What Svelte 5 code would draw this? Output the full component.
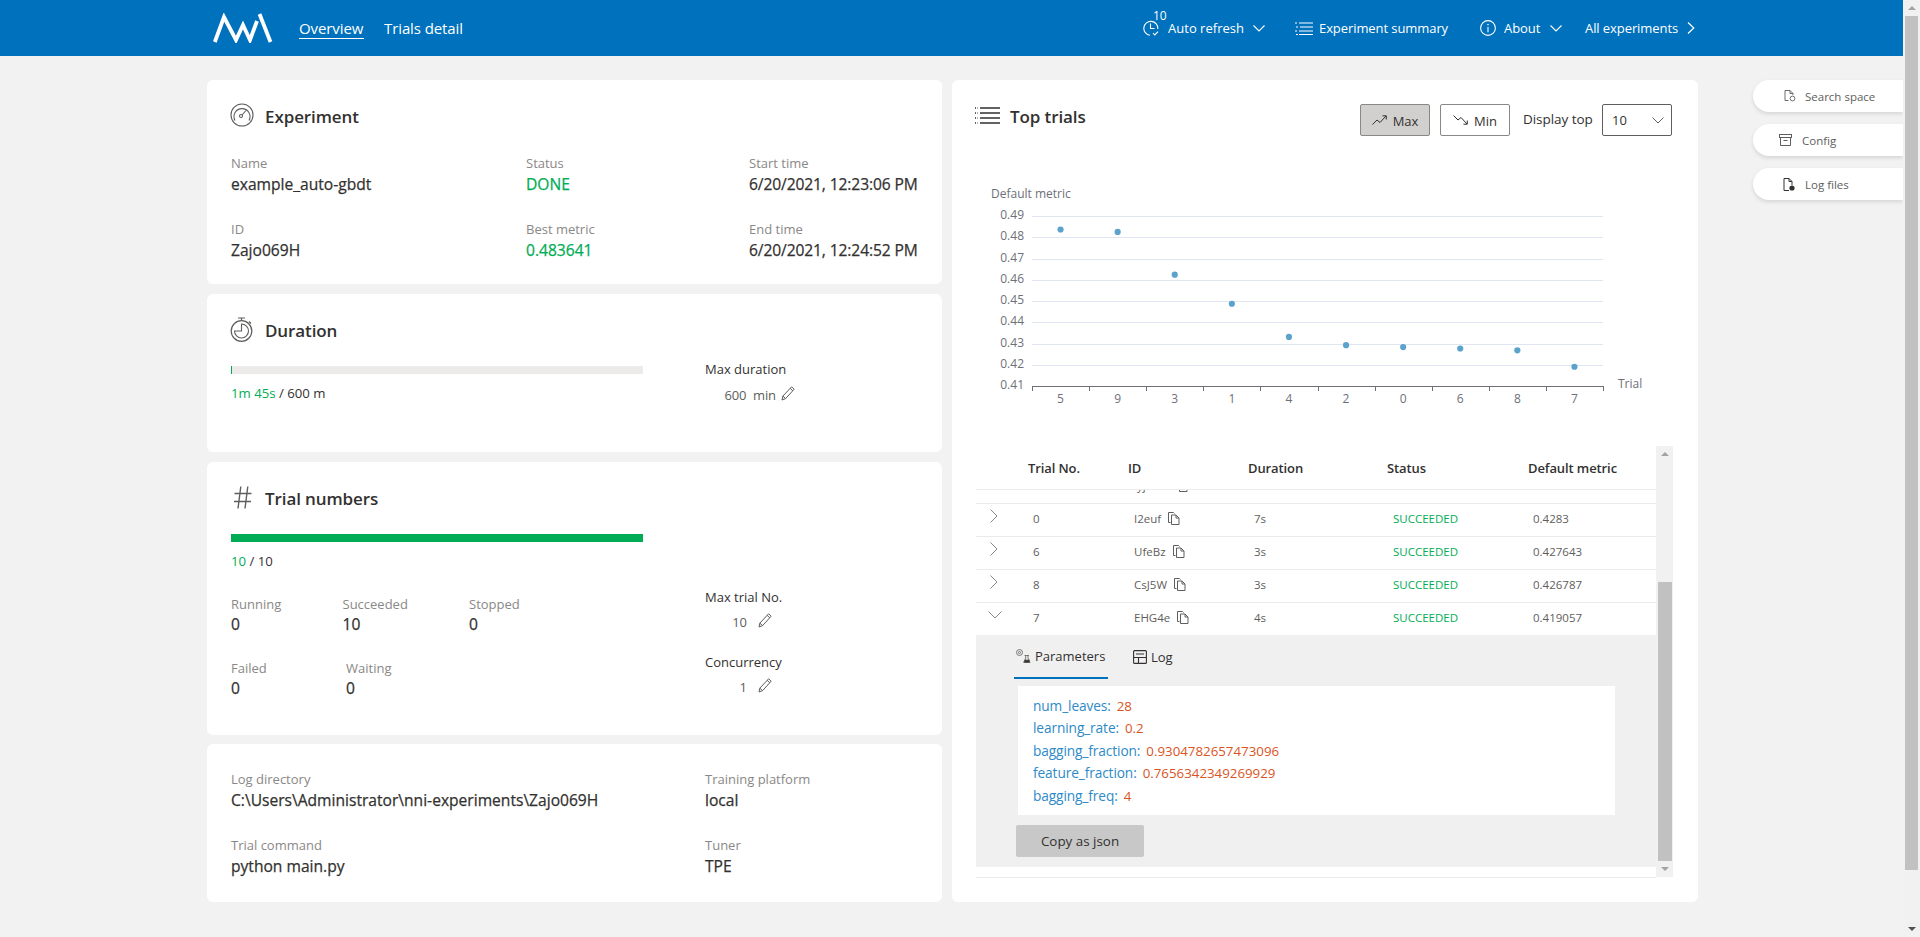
<script>
  const yTicks = [0.49, 0.48, 0.47, 0.46, 0.45, 0.44, 0.43, 0.42, 0.41];
  const points = [
    ['5', 0.483641], ['9', 0.4825], ['3', 0.4624], ['1', 0.4487], ['4', 0.4331],
    ['2', 0.4292], ['0', 0.4283], ['6', 0.427643], ['8', 0.426787], ['7', 0.419057]
  ];
  const yOf = (v) => 386 - (v - 0.41) * 2125;
  const band = 57.1;
  const rows = [
    ['0', 'I2euf', '7s', '0.4283'],
    ['6', 'UfeBz', '3s', '0.427643'],
    ['8', 'CsJ5W', '3s', '0.426787']
  ];
  const params = [
    ['num_leaves', '28'],
    ['learning_rate', '0.2'],
    ['bagging_fraction', '0.9304782657473096'],
    ['feature_fraction', '0.7656342349269929'],
    ['bagging_freq', '4']
  ];
</script>

{#snippet pencil()}
  <svg class="pencil" width="14" height="15" viewBox="0 0 14 15" fill="none" stroke="#605e5c" stroke-width="1">
    <path d="M10.6 0.8 13.2 3.2 4.6 12.6 1 14 1.8 10.2Z" />
    <path d="M9.2 2.4 11.8 4.8M1.8 10.2 4.6 12.6" />
  </svg>
{/snippet}

{#snippet copy()}
  <svg class="copy" width="12" height="13" viewBox="0 0 12 13" fill="none" stroke="#605e5c" stroke-width="1">
    <path d="M2.5 10.5H0.5V0.5H5.5L6.5 1.5" />
    <path d="M3.5 3 H8 L11 6 V12.5 H3.5Z" />
    <path d="M8 3V6H11" />
  </svg>
{/snippet}

<div class="page">
  <div class="main">
    <nav class="nav">
      <svg class="logo" width="60" height="30" viewBox="0 0 60 30" fill="none" stroke="#fff" stroke-width="3.8" stroke-linejoin="miter">
        <path d="M1.8 29 11 4 23 27 30 12 37 27 44 8" />
        <path d="M46.5 1 57.5 29" />
      </svg>
      <a class="tab active">Overview</a>
      <a class="tab second">Trials detail</a>
      <div class="nav-right">
        <div class="nav-item refresh">
          <span class="refresh-count">10</span>
          <svg width="17" height="16" viewBox="0 0 17 16" fill="none" stroke="#fff" stroke-width="1.1">
            <path d="M7 15.3A7 7 0 1 1 14.8 9" />
            <path d="M7.5 3.5V8.5H11.5" />
            <path d="M10 13.2 11.8 15 15 11.6" />
          </svg>
          <span class="nav-label auto">Auto refresh</span>
          <svg width="12" height="7" viewBox="0 0 12 7" fill="none" stroke="#fff" stroke-width="1.1"><path d="M0.5 0.5 6 6 11.5 0.5" /></svg>
        </div>
        <div class="nav-item summary">
          <svg width="18" height="13" viewBox="0 0 18 13" fill="none" stroke="#fff" stroke-width="1.1">
            <path d="M4 1H18M5 5H18M4 9H18M4 12.5H18" />
            <path d="M0 1H2M1 5H3M0 9H2M1 12.5H3" />
          </svg>
          <span class="nav-label">Experiment summary</span>
        </div>
        <div class="nav-item about">
          <svg width="16" height="16" viewBox="0 0 16 16" fill="none" stroke="#fff" stroke-width="1.1">
            <circle cx="8" cy="8" r="7.4" />
            <path d="M8 7V12.2" />
            <path d="M8 4V5.2" stroke-width="1.4" />
          </svg>
          <span class="nav-label">About</span>
          <svg width="12" height="7" viewBox="0 0 12 7" fill="none" stroke="#fff" stroke-width="1.1"><path d="M0.5 0.5 6 6 11.5 0.5" /></svg>
        </div>
        <div class="nav-item all">
          <span class="nav-label">All experiments</span>
          <svg width="8" height="12" viewBox="0 0 8 12" fill="none" stroke="#fff" stroke-width="1.2"><path d="M1 0.5 6.8 6 1 11.5" /></svg>
        </div>
      </div>
    </nav>

    <div class="content">
      <div class="left">
        <section class="card exp">
          <h2 class="head">
            <svg class="head-icon" width="24" height="24" viewBox="0 0 24 24" fill="none" stroke="#605e5c" stroke-width="1.1">
              <circle cx="12" cy="12" r="11" />
              <path d="M5 17.5A8 8 0 1 1 19 17.5" />
              <circle cx="11" cy="13" r="1.5" />
              <path d="M12 12 16 7.5" />
            </svg>
            Experiment
          </h2>
          <div class="exp-grid">
            <div><div class="label">Name</div><div class="value">example_auto-gbdt</div></div>
            <div><div class="label">Status</div><div class="value green">DONE</div></div>
            <div><div class="label">Start time</div><div class="value date">6/20/2021, 12:23:06 PM</div></div>
            <div><div class="label">ID</div><div class="value">Zajo069H</div></div>
            <div><div class="label">Best metric</div><div class="value green">0.483641</div></div>
            <div><div class="label">End time</div><div class="value date">6/20/2021, 12:24:52 PM</div></div>
          </div>
        </section>

        <section class="card dur">
          <h2 class="head">
            <svg class="head-icon" width="24" height="25" viewBox="0 0 24 25" fill="none" stroke="#605e5c" stroke-width="1.2">
              <circle cx="11.5" cy="14" r="10.3" />
              <path d="M11.5 7A7 7 0 1 1 4.5 14H11.5Z" stroke-width="1.1" />
              <path d="M8 1H15M11.5 1V4M19 4.5 21 6.5" />
            </svg>
            Duration
          </h2>
          <div class="split">
            <div class="bar-col">
              <div class="bar"><div class="bar-fill dur-fill"></div></div>
              <div class="progress"><span class="green">1m 45s</span> / 600 m</div>
            </div>
            <div class="edit-col dur-edit">
              <div class="edit-title">Max duration</div>
              <div class="edit-val"><span class="edit-num min">600&nbsp; min</span>{@render pencil()}</div>
            </div>
          </div>
        </section>

        <section class="card trials">
          <h2 class="head">
            <svg class="head-icon hash" width="18" height="23" viewBox="0 0 18 23" fill="none" stroke="#605e5c" stroke-width="1.4">
              <path d="M6.8 0.5 4 22.5M13.8 0.5 11 22.5M0.5 7.5H17.5M0 15.5H17" />
            </svg>
            Trial numbers
          </h2>
          <div class="split">
            <div class="bar-col">
              <div class="bar"><div class="bar-fill full"></div></div>
              <div class="progress"><span class="green">10</span> / 10</div>
              <div class="stats first">
                <div class="st w1"><div class="label">Running</div><div class="value">0</div></div>
                <div class="st w2"><div class="label">Succeeded</div><div class="value">10</div></div>
                <div class="st"><div class="label">Stopped</div><div class="value">0</div></div>
              </div>
              <div class="stats">
                <div class="st w3"><div class="label">Failed</div><div class="value">0</div></div>
                <div class="st"><div class="label">Waiting</div><div class="value">0</div></div>
              </div>
            </div>
            <div class="edit-col trial-edit">
              <div class="edit-title">Max trial No.</div>
              <div class="edit-val"><span class="edit-num n">10</span>{@render pencil()}</div>
              <div class="edit-title conc">Concurrency</div>
              <div class="edit-val"><span class="edit-num n">1</span>{@render pencil()}</div>
            </div>
          </div>
        </section>

        <section class="card log">
          <div class="log-grid">
            <div><div class="label">Log directory</div><div class="value">C:\Users\Administrator\nni-experiments\Zajo069H</div></div>
            <div><div class="label">Training platform</div><div class="value">local</div></div>
            <div><div class="label">Trial command</div><div class="value">python main.py</div></div>
            <div><div class="label">Tuner</div><div class="value">TPE</div></div>
          </div>
        </section>
      </div>

      <section class="card right">
        <div class="top-row">
          <h2 class="head">
            <svg class="head-icon" width="25" height="17" viewBox="0 0 25 17" fill="none" stroke="#323130" stroke-width="1.3">
              <path d="M5 1H25M5 6H25M5 11H25M5 16H25" />
              <path d="M0 1H2.5M0 6H2.5M0 11H2.5M0 16H2.5" stroke-dasharray="1 1" />
            </svg>
            Top trials
          </h2>
          <div class="controls">
            <button class="btn on">
              <svg width="15" height="10" viewBox="0 0 15 10" fill="none" stroke="#323130" stroke-width="1"><path d="M0.5 9.5 5 5 8 7.5 14 1M10.5 0.8H14.3V4.5" /></svg>
              <span class="btn-t">Max</span>
            </button>
            <button class="btn">
              <svg width="15" height="10" viewBox="0 0 15 10" fill="none" stroke="#323130" stroke-width="1"><path d="M0.5 0.5 5 5 8 2.5 14 9M10.5 9.2H14.3V5.5" /></svg>
              <span class="btn-t">Min</span>
            </button>
            <span class="disp">Display top</span>
            <div class="select">
              <span>10</span>
              <svg width="12" height="7" viewBox="0 0 12 7" fill="none" stroke="#605e5c" stroke-width="1"><path d="M0.5 0.5 6 6 11.5 0.5" /></svg>
            </div>
          </div>
        </div>

        <svg class="chart" width="697" height="240" viewBox="975 180 697 240">
          <text x="991" y="198" class="ct">Default metric</text>
          {#each yTicks as t, i}
            <text x="1024" y={216 + i * 21.25 + 3} class="ct" text-anchor="end">{t.toFixed(2)}</text>
            {#if i < 8}
              <line x1="1032" x2="1603" y1={Math.round(216 + i * 21.25) + 0.5} y2={Math.round(216 + i * 21.25) + 0.5} stroke="#e0e6f1" />
            {/if}
          {/each}
          <line x1="1032" x2="1603" y1="386.5" y2="386.5" stroke="#6e7079" />
          {#each points as p, i}
            <line x1={Math.round(1032 + i * band) + 0.5} x2={Math.round(1032 + i * band) + 0.5} y1="386" y2="391" stroke="#6e7079" />
            <text x={1032 + band / 2 + i * band} y="403" class="ct" text-anchor="middle">{p[0]}</text>
            <circle cx={1032 + band / 2 + i * band} cy={yOf(p[1])} r="3.1" fill="#5ba3cb" />
          {/each}
          <line x1="1603.5" x2="1603.5" y1="386" y2="391" stroke="#6e7079" />
          <text x="1618" y="388" class="ct">Trial</text>
        </svg>

        <div class="table">
          <div class="tbody">
            <div class="thead">
              <span>Trial No.</span><span>ID</span><span>Duration</span><span>Status</span><span>Default metric</span>
            </div>
            <div class="clip"><div class="clip-inner"><span class="clip-id">yj</span>{@render copy()}</div></div>
            {#each rows as r}
              <div class="row">
                <svg class="chev" width="8" height="14" viewBox="0 0 8 14" fill="none" stroke="#8a8886" stroke-width="1"><path d="M0.5 0.5 7 7 0.5 13.5" /></svg>
                <span>{r[0]}</span>
                <span class="id">{r[1]}{@render copy()}</span>
                <span>{r[2]}</span>
                <span class="ok">SUCCEEDED</span>
                <span>{r[3]}</span>
              </div>
            {/each}
            <div class="row last">
              <svg class="chev" width="14" height="8" viewBox="0 0 14 8" fill="none" stroke="#8a8886" stroke-width="1"><path d="M0.5 0.5 7 7 13.5 0.5" /></svg>
              <span>7</span>
              <span class="id">EHG4e{@render copy()}</span>
              <span>4s</span>
              <span class="ok">SUCCEEDED</span>
              <span>0.419057</span>
            </div>
            <div class="detail">
              <div class="dtabs">
                <div class="dtab sel">
                  <svg width="15" height="14" viewBox="0 0 15 14" fill="none" stroke="#605e5c" stroke-width="0.8">
                    <circle cx="3.5" cy="3.5" r="3" />
                    <circle cx="3.5" cy="3.5" r="1.1" />
                    <path d="M8.5 6.5H13M9.7 6.5V9L7.8 13.5H14L12 9V6.5" />
                    <path d="M8.6 11H13.4V13.5H8Z" fill="#323130" />
                  </svg>
                  Parameters
                </div>
                <div class="dtab">
                  <svg width="14" height="14" viewBox="0 0 14 14" fill="none" stroke="#323130" stroke-width="1.1">
                    <rect x="0.6" y="0.6" width="12.8" height="12.8" rx="1" />
                    <path d="M3 4H11M0.6 7.5H13.4M5.5 7.5V13.4" />
                  </svg>
                  Log
                </div>
              </div>
              <div class="params">
                {#each params as p}
                  <div class="param"><span class="key">{p[0]}:</span><span class="val">{p[1]}</span></div>
                {/each}
              </div>
              <button class="copy-btn">Copy as json</button>
            </div>
            <div class="tail"></div>
          </div>
          <div class="tscroll">
            <span class="arr up"></span>
            <div class="tspace"></div>
            <div class="tthumb"></div>
            <span class="arr down"></span>
          </div>
        </div>
      </section>

      <aside class="side">
        <div class="pill">
          <svg class="s1" width="12" height="12" viewBox="0 0 12 12" fill="none" stroke="#605e5c" stroke-width="0.9"><path d="M4.5 10.5H1V0.5H6L9 3.5V5" /><path d="M6 0.5V3.5H9" /><circle cx="8.5" cy="8.5" r="2.4" /></svg>
          <span>Search space</span>
        </div>
        <div class="pill">
          <svg class="s2" width="13" height="12" viewBox="0 0 13 12" fill="none" stroke="#605e5c" stroke-width="1"><rect x="0.5" y="0.5" width="12" height="3" /><path d="M1.5 3.5V11.5H11.5V3.5M4.5 6.5H8.5" /></svg>
          <span>Config</span>
        </div>
        <div class="pill">
          <svg class="s3" width="12" height="13" viewBox="0 0 12 13" fill="none" stroke="#323130" stroke-width="1"><path d="M6 12.5H1V0.5H6L9 3.5V7" /><path d="M6 0.5V3.5H9" /><circle cx="9" cy="10" r="2.6" fill="#323130" stroke="none" /></svg>
          <span>Log files</span>
        </div>
      </aside>
    </div>
  </div>

  <div class="vscroll">
    <span class="arr up"></span>
    <div class="vthumb"></div>
    <div class="tspace"></div>
    <span class="arr down dark"></span>
  </div>
</div>

<style>
  :global(body) {
    margin: 0;
    background: #f2f2f2;
    font-family: "Open Sans", "Noto Sans", sans-serif;
    color: #323130;
  }
  .page { display: flex; height: 937px; overflow: hidden; }
  .main { width: 1903px; flex: none; }
  .nav {
    height: 56px;
    background: #0071bc;
    display: flex;
    align-items: center;
    color: #fff;
    padding-left: 213px;
    box-sizing: border-box;
  }
  .logo { display: block; }
  .tab { font-size: 15px; line-height: 20px; color: #fff; margin-top: -1px; letter-spacing: -0.1px; white-space: nowrap; }
  .tab.active { margin-left: 26px; width: 65px; box-shadow: 0 1px 0 0 #fff; }
  .tab.second { margin-left: 20px; }
  .nav-right { margin-left: auto; padding-right: 208px; display: flex; align-items: center; }
  .nav-item { display: flex; align-items: center; font-size: 13px; position: relative; white-space: nowrap; flex: none; }
  .nav-label { letter-spacing: -0.08px; }
  .refresh { width: 152px; }
  .refresh-count { position: absolute; left: 10px; top: -10px; font-size: 12px; line-height: 14px; }
  .nav-label.auto { margin-left: 8px; width: 85px; letter-spacing: 0.02px; }
  .summary { width: 185px; }
  .summary .nav-label { margin-left: 6px; }
  .about { width: 105px; }
  .about .nav-label { margin-left: 8px; width: 46px; }
  .all { width: 110px; }
  .all .nav-label { width: 102px; }

  .content { display: flex; padding: 24px 0 0 207px; align-items: flex-start; }
  .left { width: 735px; display: flex; flex-direction: column; flex: none; }
  .card { background: #fff; border-radius: 6px; box-sizing: border-box; }
  .left .card { padding: 24px 0 0 24px; margin-bottom: 10px; }
  .exp { height: 204px; }
  .dur { height: 158px; }
  .left .trials { height: 273px; margin-bottom: 9px; }
  .log { height: 158px; }
  .head {
    margin: -1px 0 1px;
    height: 26px;
    display: flex;
    align-items: center;
    font-size: 17px;
    font-weight: 600;
    letter-spacing: -0.1px;
    color: #323130;
    white-space: nowrap;
  }
  .head-icon { flex: none; margin-left: -1px; margin-right: 11px; margin-top: -2px; }
  .hash { margin-left: 3px; margin-right: 13px; margin-top: -2px; }
  .label { font-size: 13px; line-height: 22px; color: #8a8886; white-space: nowrap; }
  .value {
    font-size: 15.6px;
    line-height: 22px;
    font-weight: 400;
    -webkit-text-stroke: 0.25px currentColor;
    color: #323130;
    white-space: nowrap;
  }
  .value.date { letter-spacing: -0.11px; }
  .exp-grid .value, .log-grid .value { margin: -1px 0 1px; }
  .value.green, .green { color: #00ad56; }
  .exp-grid {
    margin-top: 23px;
    display: grid;
    grid-template-columns: 295px 223px 1fr;
    row-gap: 22px;
  }
  .split { display: flex; align-items: flex-start; }
  .bar-col { width: 412px; flex: none; margin-top: 22px; }
  .bar { height: 8px; background: #edebe9; }
  .bar-fill { height: 100%; background: #00ad56; }
  .dur-fill { width: 1px; }
  .full { width: 100%; }
  .progress { margin-top: 8px; font-size: 13.2px; line-height: 22px; color: #323130; }
  .edit-col { margin-left: 62px; font-size: 13px; line-height: 22px; }
  .dur-edit { margin-top: 14px; }
  .trial-edit { margin-top: 74px; }
  .edit-title { color: #323130; white-space: nowrap; }
  .edit-val { margin-top: 4px; display: flex; align-items: center; color: #605e5c; }
  .trial-edit .edit-val { margin-top: 3px; }
  .edit-num { display: block; text-align: right; white-space: nowrap; flex: none; }
  .edit-num.min { width: 71px; margin-right: 5px; letter-spacing: -0.1px; }
  .edit-num.n { width: 42px; margin-right: 11px; }
  .edit-title.conc { margin-top: 18px; }
  .pencil { flex: none; margin-top: -3px; }
  .stats { display: flex; margin-top: 24px; }
  .stats.first { margin-top: 22px; }
  .stats .label, .stats .value { line-height: 20px; }
  .st { flex: none; }
  .w1 { width: 111.5px; }
  .w2 { width: 126.5px; }
  .w3 { width: 115px; }
  .log-grid { display: grid; grid-template-columns: 474px 1fr; row-gap: 22px; }

  .right { width: 746px; height: 822px; flex: none; margin-left: 10px; padding: 24px 26px 0 23px; }
  .top-row { display: flex; justify-content: space-between; align-items: flex-start; height: 32px; }
  .top-row .head-icon { margin-left: 0; margin-right: 10px; }
  .controls { display: flex; align-items: center; height: 32px; }
  .btn {
    width: 70px;
    height: 32px;
    box-sizing: border-box;
    background: #fff;
    border: 1px solid #8a8886;
    border-radius: 2px;
    font: inherit;
    font-size: 13px;
    color: #323130;
    display: flex;
    align-items: center;
    justify-content: center;
    gap: 6px;
    padding: 0;
    margin-left: 10px;
  }
  .btn-t { margin-top: 2px; }
  .btn.on { background: #d2d0ce; }
  .disp { margin-left: 13px; width: 66px; font-size: 13.5px; white-space: nowrap; margin-top: -2px; letter-spacing: -0.05px; }
  .select {
    width: 70px;
    height: 32px;
    margin-left: 13px;
    box-sizing: border-box;
    border: 1px solid #605e5c;
    border-radius: 2px;
    font-size: 13px;
    display: flex;
    align-items: center;
    justify-content: space-between;
    padding: 0 7px 0 9px;
  }
  .chart { display: block; margin-top: 44px; }
  .ct { font-size: 12px; fill: #6e7079; font-family: "Open Sans", sans-serif; }
  .table { display: flex; height: 432px; margin-top: 26px; margin-left: 1px; width: 697px; }
  .tbody { width: 680px; flex: none; }
  .thead {
    height: 43px;
    border-bottom: 1px solid #edebe9;
    display: grid;
    grid-template-columns: 52px 100px 120px 139px 141px 1fr;
    align-items: center;
    font-size: 13px;
    font-weight: 600;
    letter-spacing: -0.1px;
    color: #323130;
    white-space: nowrap;
  }
  .thead span:first-child { grid-column: 2; }
  .clip { height: 13px; overflow: hidden; border-bottom: 1px solid #edebe9; color: #605e5c; font-size: 11.5px; }
  .clip-inner { margin: -13px 0 0 158px; display: flex; align-items: center; height: 16px; }
  .clip-id { box-sizing: border-box; width: 35px; padding-left: 3px; }
  .row {
    height: 28px;
    padding-bottom: 4px;
    border-bottom: 1px solid #edebe9;
    display: grid;
    grid-template-columns: 57px 101px 120px 139px 140px 1fr;
    align-items: center;
    font-size: 11.5px;
    color: #605e5c;
    white-space: nowrap;
  }
  .row.last { border-bottom: 0; }
  .chev { margin-left: 14px; margin-top: -4px; }
  .row.last .chev { margin-left: 12px; }
  .id { display: flex; align-items: center; }
  .copy { flex: none; margin-left: 7px; }
  .ok { color: #00ad56; }
  .detail { height: 232px; background: #f0f0f0; padding-left: 38px; box-sizing: border-box; }
  .dtabs { display: flex; height: 44px; }
  .dtab {
    display: flex;
    align-items: center;
    gap: 4px;
    font-size: 13px;
    color: #323130;
    box-sizing: border-box;
    height: 44px;
    padding-left: 2px;
    padding-bottom: 1px;
    margin-right: 23px;
    white-space: nowrap;
  }
  .dtab.sel { width: 94px; border-bottom: 2px solid #0071bc; }
  .params {
    margin: 7px 0 0 4px;
    width: 597px;
    height: 129px;
    box-sizing: border-box;
    background: #fff;
    padding: 9px 15px 0;
  }
  .param { height: 22.4px; line-height: 22.4px; white-space: nowrap; display: flex; align-items: baseline; }
  .key { color: #2d8ac7; margin-right: 6px; font-size: 13.7px; letter-spacing: -0.1px; }
  .val { color: #d9541e; font-size: 13.3px; }
  .copy-btn {
    display: block;
    margin: 10px 0 0 2px;
    width: 128px;
    height: 32px;
    border: 0;
    border-radius: 2px;
    background: #c8c8c8;
    font: inherit;
    font-size: 13.4px;
    color: #323130;
    padding: 0;
  }
  .tail { height: 10px; border-bottom: 1px solid #edebe9; }
  .tscroll { width: 17px; flex: none; background: #f1f1f1; display: flex; flex-direction: column; height: 431px; }
  .tspace { flex: 1; }
  .tthumb { width: 14px; margin-left: 2px; height: 279px; background: #c1c1c1; flex: none; }
  .arr { flex: none; display: block; height: 16px; position: relative; }
  .arr::before {
    content: "";
    position: absolute;
    left: 4.5px;
    border-left: 4px solid transparent;
    border-right: 4px solid transparent;
  }
  .arr.up::before { top: 6px; border-bottom: 4px solid #a3a3a3; }
  .arr.down::before { top: 6px; border-top: 4px solid #a3a3a3; }
  .arr.dark::before { border-top-color: #505050; }

  .side { margin-left: 55px; width: 150px; flex: none; }
  .pill {
    height: 32px;
    margin-bottom: 12px;
    background: #fff;
    border-radius: 16px 0 0 16px;
    box-shadow: 0 2px 4px rgba(0, 0, 0, 0.12);
    display: flex;
    align-items: center;
    font-size: 11.5px;
    color: #605e5c;
    white-space: nowrap;
  }
  .pill svg { flex: none; }
  .s1 { margin-left: 31px; margin-right: 9px; }
  .s2 { margin-left: 26px; margin-right: 10px; }
  .s3 { margin-left: 30px; margin-right: 10px; }

  .vscroll { width: 17px; flex: none; background: #f1f1f1; display: flex; flex-direction: column; height: 937px; }
  .vthumb { width: 13px; margin-left: 2px; height: 854px; background: #c1c1c1; flex: none; }
</style>
